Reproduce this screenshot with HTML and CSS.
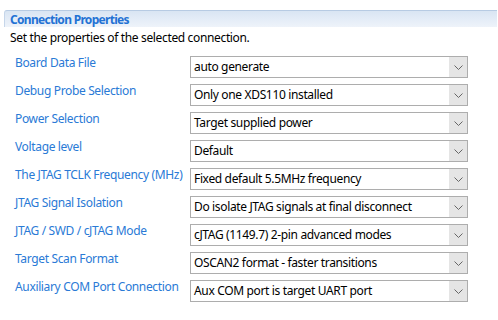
FILE: index.html
```html
<!DOCTYPE html>
<html lang="en">
<head>
  <meta charset="UTF-8">
  <title>Connection Properties</title>
  <link rel="stylesheet" href="styles.css">
</head>
<body>
  <div class="section">
    <div class="section-head">Connection Properties</div>
    <p class="desc">Set the properties of the selected connection.</p>

    <div class="props">
      <label class="prop-label">Board Data File</label>
      <div class="combo"><span class="combo-text">auto generate</span><span class="combo-btn"><svg width="9" height="5" viewBox="0 0 9 5"><path d="M0.5 0.5 L4.5 4.5 L8.5 0.5" fill="none" stroke="#666" stroke-width="1"/></svg></span></div>

      <label class="prop-label">Debug Probe Selection</label>
      <div class="combo"><span class="combo-text">Only one XDS110 installed</span><span class="combo-btn"><svg width="9" height="5" viewBox="0 0 9 5"><path d="M0.5 0.5 L4.5 4.5 L8.5 0.5" fill="none" stroke="#666" stroke-width="1"/></svg></span></div>

      <label class="prop-label">Power Selection</label>
      <div class="combo"><span class="combo-text">Target supplied power</span><span class="combo-btn"><svg width="9" height="5" viewBox="0 0 9 5"><path d="M0.5 0.5 L4.5 4.5 L8.5 0.5" fill="none" stroke="#666" stroke-width="1"/></svg></span></div>

      <label class="prop-label">Voltage level</label>
      <div class="combo"><span class="combo-text">Default</span><span class="combo-btn"><svg width="9" height="5" viewBox="0 0 9 5"><path d="M0.5 0.5 L4.5 4.5 L8.5 0.5" fill="none" stroke="#666" stroke-width="1"/></svg></span></div>

      <label class="prop-label">The JTAG TCLK Frequency (MHz)</label>
      <div class="combo"><span class="combo-text">Fixed default 5.5MHz frequency</span><span class="combo-btn"><svg width="9" height="5" viewBox="0 0 9 5"><path d="M0.5 0.5 L4.5 4.5 L8.5 0.5" fill="none" stroke="#666" stroke-width="1"/></svg></span></div>

      <label class="prop-label">JTAG Signal Isolation</label>
      <div class="combo"><span class="combo-text">Do isolate JTAG signals at final disconnect</span><span class="combo-btn"><svg width="9" height="5" viewBox="0 0 9 5"><path d="M0.5 0.5 L4.5 4.5 L8.5 0.5" fill="none" stroke="#666" stroke-width="1"/></svg></span></div>

      <label class="prop-label">JTAG / SWD / cJTAG Mode</label>
      <div class="combo"><span class="combo-text">cJTAG (1149.7) 2-pin advanced modes</span><span class="combo-btn"><svg width="9" height="5" viewBox="0 0 9 5"><path d="M0.5 0.5 L4.5 4.5 L8.5 0.5" fill="none" stroke="#666" stroke-width="1"/></svg></span></div>

      <label class="prop-label">Target Scan Format</label>
      <div class="combo"><span class="combo-text">OSCAN2 format - faster transitions</span><span class="combo-btn"><svg width="9" height="5" viewBox="0 0 9 5"><path d="M0.5 0.5 L4.5 4.5 L8.5 0.5" fill="none" stroke="#666" stroke-width="1"/></svg></span></div>

      <label class="prop-label">Auxiliary COM Port Connection</label>
      <div class="combo"><span class="combo-text">Aux COM port is target UART port</span><span class="combo-btn"><svg width="9" height="5" viewBox="0 0 9 5"><path d="M0.5 0.5 L4.5 4.5 L8.5 0.5" fill="none" stroke="#666" stroke-width="1"/></svg></span></div>
    </div>
  </div>
</body>
</html>
```

FILE: styles.css
```css
body {
  margin: 0;
  background-color: #ffffff;
  font-family: 'Noto Sans', 'Open Sans', sans-serif;
  font-size: 12px;
  letter-spacing: -0.35px;
  color: #000000;
}

.section {
  padding: 10px 0 0 4px;
}

/* title band with the light blue gradient */
.section-head {
  height: 15px;
  margin-right: 1px;
  padding: 1px 0 0 5px;
  border-top: 1px solid #b7cbe3;
  border-left: 1px solid #c6d6ea;
  border-top-left-radius: 3px;
  background: linear-gradient(to bottom, #d9e5f3, #eef3fa);
  color: #2372d4;
  font-weight: bold;
  letter-spacing: -0.7px;
  line-height: 15px;
}

.desc {
  margin: 0;
  padding: 3px 0 0 6px;
  line-height: 16px;
}

.props {
  display: grid;
  grid-template-columns: 175px 278px;
  row-gap: 6px;
  padding: 10px 0 0 11px;
}

.prop-label {
  line-height: 14px;
  color: #2a7ad6;
  white-space: nowrap;
}

.combo {
  display: flex;
  height: 22px;
  box-sizing: border-box;
  border: 1px solid #adadad;
  background-color: #ffffff;
}

.combo-text {
  flex: 1;
  padding-left: 3px;
  line-height: 20px;
  white-space: nowrap;
  overflow: hidden;
}

.combo-btn {
  display: flex;
  align-items: center;
  justify-content: center;
  width: 18px;
  background-color: #e5e5e5;
}
```
